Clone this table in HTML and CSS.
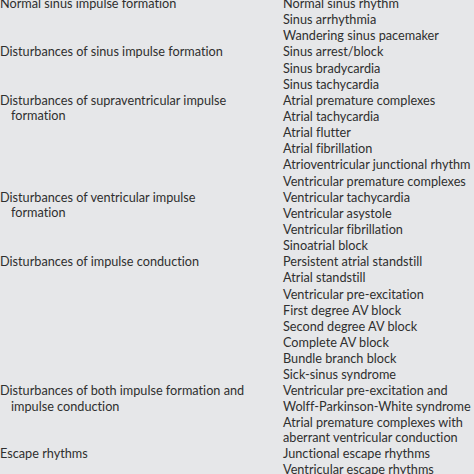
FILE: index.html
```html
<!DOCTYPE html>
<html>
<head>
<meta charset="utf-8">
<link rel="stylesheet" href="styles.css">
</head>
<body>
<div class="table">
  <div class="group">
    <div class="label">Normal sinus impulse formation</div>
    <div class="items">
      <div class="item">Normal sinus rhythm</div>
      <div class="item">Sinus arrhythmia</div>
      <div class="item">Wandering sinus pacemaker</div>
    </div>
  </div>
  <div class="group">
    <div class="label">Disturbances of sinus impulse formation</div>
    <div class="items">
      <div class="item">Sinus arrest/block</div>
      <div class="item">Sinus bradycardia</div>
      <div class="item">Sinus tachycardia</div>
    </div>
  </div>
  <div class="group">
    <div class="label">Disturbances of supraventricular impulse<br>formation</div>
    <div class="items">
      <div class="item">Atrial premature complexes</div>
      <div class="item">Atrial tachycardia</div>
      <div class="item">Atrial flutter</div>
      <div class="item">Atrial fibrillation</div>
      <div class="item">Atrioventricular junctional rhythm</div>
      <div class="item">Ventricular premature complexes</div>
    </div>
  </div>
  <div class="group">
    <div class="label">Disturbances of ventricular impulse<br>formation</div>
    <div class="items">
      <div class="item">Ventricular tachycardia</div>
      <div class="item">Ventricular asystole</div>
      <div class="item">Ventricular fibrillation</div>
      <div class="item">Sinoatrial block</div>
    </div>
  </div>
  <div class="group">
    <div class="label">Disturbances of impulse conduction</div>
    <div class="items">
      <div class="item">Persistent atrial standstill</div>
      <div class="item">Atrial standstill</div>
      <div class="item">Ventricular pre-excitation</div>
      <div class="item">First degree AV block</div>
      <div class="item">Second degree AV block</div>
      <div class="item">Complete AV block</div>
      <div class="item">Bundle branch block</div>
      <div class="item">Sick-sinus syndrome</div>
    </div>
  </div>
  <div class="group">
    <div class="label">Disturbances of both impulse formation and<br>impulse conduction</div>
    <div class="items">
      <div class="item">Ventricular pre-excitation and<br>Wolff-Parkinson-White syndrome</div>
      <div class="item">Atrial premature complexes with<br>aberrant ventricular conduction</div>
    </div>
  </div>
  <div class="group">
    <div class="label">Escape rhythms</div>
    <div class="items">
      <div class="item">Junctional escape rhythms</div>
      <div class="item">Ventricular escape rhythms</div>
    </div>
  </div>
</div>
</body>
</html>
```

FILE: styles.css
```css
html, body {
  margin: 0;
  padding: 0;
  background: #e6e7e9;
  overflow: hidden;
}

.table {
  margin-top: -4px;
  font-family: Lato, "Open Sans", sans-serif;
  font-size: 12.7px;
  line-height: 15.35px;
  color: #2f2f2f;
  white-space: nowrap;
  font-variant-ligatures: none;
  font-feature-settings: "liga" 0, "dlig" 0;
}

.group {
  display: grid;
  grid-template-columns: 283px 1fr;
}

.label {
  padding-left: 11px;
  text-indent: -11px;
}

.item {
  padding-bottom: 0.8px;
}
```
